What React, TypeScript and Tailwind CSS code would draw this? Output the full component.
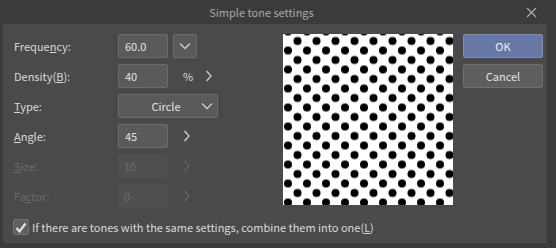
import React from "react";

const font = { fontFamily: '"Noto Sans CJK JP", "Noto Sans", sans-serif' };

function ChevDown({ className = "" }: { className?: string }) {
    return (
        <svg width="12" height="8" viewBox="0 0 12 8" className={className}>
            <polyline points="1,1.5 6,6.5 11,1.5" fill="none" stroke="currentColor" strokeWidth="1.3" />
        </svg>
    );
}

function ChevRight({ className = "" }: { className?: string }) {
    return (
        <svg width="7" height="12" viewBox="0 0 7 12" className={className}>
            <polyline points="1.5,1 6,6 1.5,11" fill="none" stroke="currentColor" strokeWidth="1.3" />
        </svg>
    );
}

function Field({ value, disabled = false }: { value: string; disabled?: boolean }) {
    return (
        <div
            className={`w-[50px] h-[24px] rounded-[2px] flex items-center pl-[6px] text-[11px] ${
                disabled
                    ? "bg-[#505050] text-[#6c6c6c]"
                    : "bg-[#5a5a5a] border border-[#6c6c6c] text-[#e4e4e4]"
            }`}
        >
            {value}
        </div>
    );
}

function Row({ label, children, disabled = false }: { label: React.ReactNode; children: React.ReactNode; disabled?: boolean }) {
    return (
        <div className="flex items-center h-[24px]">
            <div className={`w-[104px] text-[11px] ${disabled ? "text-[#6c6c6c]" : "text-[#dadada]"}`}>{label}</div>
            {children}
        </div>
    );
}

export default function App() {
    return (
        <div className="w-[556px] h-[248px] bg-[#3b3b3b] flex flex-col select-none" style={font}>
            {/* Title bar */}
            <div className="h-[24px] flex items-center shrink-0">
                <div className="flex-1 text-center text-[11px] text-[#a8a8a8]">Simple tone settings</div>
                <div className="w-[33px] flex justify-start pl-[3px] text-[#b0b0b0]">
                    <svg width="11" height="11" viewBox="0 0 11 11">
                        <path d="M1 1 L10 10 M10 1 L1 10" stroke="currentColor" strokeWidth="1.1" />
                    </svg>
                </div>
            </div>

            {/* Body */}
            <div className="ml-[3px] mr-[9px] h-[219px] bg-[#4a4a4a] pt-[10px] pl-[11px] flex flex-col">
                <div className="flex">
                    <div className="w-[269px] flex flex-col gap-[6px]">
                        <Row label={<>Freque<span className="underline">n</span>cy:</>}>
                            <Field value="60.0" />
                            <div className="ml-[5px] w-[24px] h-[24px] rounded-[2px] bg-[#5a5a5a] border border-[#6c6c6c] flex items-center justify-center text-[#cfcfcf]">
                                <ChevDown />
                            </div>
                        </Row>
                        <Row label={<>Density(<span className="underline">B</span>):</>}>
                            <Field value="40" />
                            <span className="ml-[15px] text-[11px] text-[#dadada]">%</span>
                            <ChevRight className="ml-[12px] text-[#cfcfcf]" />
                        </Row>
                        <Row label={<><span className="underline">T</span>ype:</>}>
                            <div className="w-[100px] h-[24px] rounded-[2px] bg-[#5a5a5a] border border-[#6c6c6c] flex items-center text-[11px] text-[#e4e4e4]">
                                <div className="flex-1 text-center pl-[12px]">Circle</div>
                                <ChevDown className="mr-[4px] text-[#cfcfcf]" />
                            </div>
                        </Row>
                        <Row label={<><span className="underline">A</span>ngle:</>}>
                            <Field value="45" />
                            <ChevRight className="ml-[15px] text-[#cfcfcf]" />
                        </Row>
                        <Row disabled label={<><span className="underline">S</span>ize:</>}>
                            <Field value="10" disabled />
                            <ChevRight className="ml-[15px] text-[#666666]" />
                        </Row>
                        <Row disabled label={<>Fa<span className="underline">c</span>tor:</>}>
                            <Field value="0" disabled />
                            <ChevRight className="ml-[15px] text-[#666666]" />
                        </Row>
                    </div>

                    {/* Preview */}
                    <svg width="170" height="171" className="shrink-0 bg-white">
                        <defs>
                            <pattern id="tone" x="5" y="-2.5" width="19" height="19" patternUnits="userSpaceOnUse">
                                <circle cx="0" cy="0" r="4" fill="#000" />
                                <circle cx="19" cy="0" r="4" fill="#000" />
                                <circle cx="0" cy="19" r="4" fill="#000" />
                                <circle cx="19" cy="19" r="4" fill="#000" />
                                <circle cx="9.5" cy="9.5" r="4" fill="#000" />
                            </pattern>
                        </defs>
                        <rect width="170" height="171" fill="url(#tone)" />
                    </svg>

                    {/* Buttons */}
                    <div className="ml-[10px] flex flex-col gap-[6px]">
                        <div className="w-[80px] h-[24px] rounded-[2px] bg-[#6778a6] border border-[#7d8dba] flex items-center justify-center text-[11px] text-[#eef0f6]">
                            OK
                        </div>
                        <div className="w-[80px] h-[24px] rounded-[2px] bg-[#5e5e5e] border border-[#707070] flex items-center justify-center text-[11px] text-[#e4e4e4]">
                            Cancel
                        </div>
                    </div>
                </div>

                {/* Checkbox row */}
                <div className="flex items-center mt-[11px] -ml-[1px]">
                    <div className="w-[16px] h-[16px] rounded-[2px] bg-[#606060] border border-[#727272] flex items-center justify-center text-[#e6e6e6]">
                        <svg width="12" height="11" viewBox="0 0 12 11">
                            <polyline points="1.5,6 4.5,9.5 10.5,1.5" fill="none" stroke="currentColor" strokeWidth="2.2" />
                        </svg>
                    </div>
                    <span className="ml-[3px] text-[11px] text-[#dadada]">
                        If there are tones with the same settings, combine them into one(<span className="underline">L</span>)
                    </span>
                </div>
            </div>
        </div>
    );
}
